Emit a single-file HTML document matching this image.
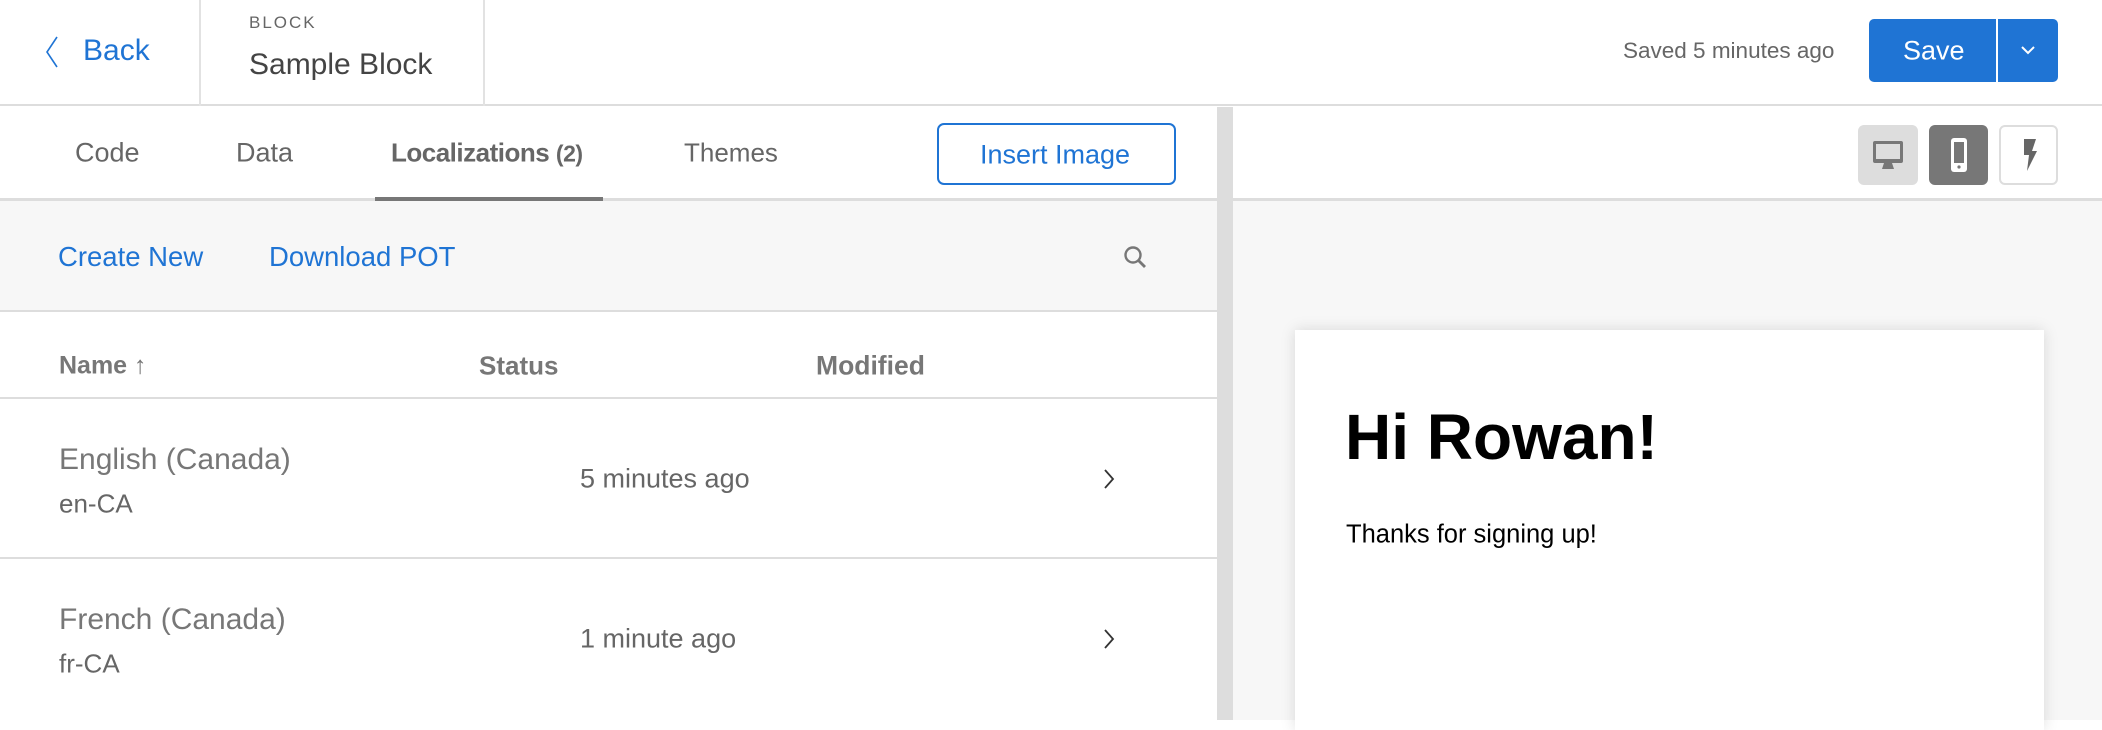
<!DOCTYPE html>
<html><head><meta charset="utf-8"><style>
*{margin:0;padding:0;box-sizing:border-box}
body{width:2102px;height:720px;overflow:hidden;background:#fff;font-family:"Liberation Sans",sans-serif;position:relative}
.a{position:absolute;white-space:nowrap}
.c{transform:translateY(-50%)}
</style></head><body>
<!-- header -->
<div class="a" style="left:0;top:0;width:2102px;height:106px;border-bottom:2px solid #ddd"></div>
<div class="a" style="left:199px;top:0;width:2px;height:106px;background:#e2e2e2"></div>
<div class="a" style="left:483px;top:0;width:2px;height:106px;background:#e2e2e2"></div>
<svg class="a" style="left:42px;top:35px" width="18" height="34"><path d="M15 2 L5 17 L15 32" stroke="#1f74d4" stroke-width="1.6" fill="none"/></svg>
<div class="a c" style="left:83px;top:51px;font-size:30px;color:#1f74d4">Back</div>
<div class="a c" style="left:249px;top:23px;font-size:17px;letter-spacing:2px;color:#666">BLOCK</div>
<div class="a c" style="left:249px;top:65px;font-size:30px;color:#444">Sample Block</div>
<div class="a c" style="left:1623px;top:51px;font-size:22.5px;color:#666">Saved 5 minutes ago</div>
<div class="a" style="left:1869px;top:19px;width:189px;height:63px;background:#1f74d4;border-radius:5px"></div>
<div class="a" style="left:1996px;top:19px;width:2px;height:63px;background:#fff"></div>
<div class="a c" style="left:1903px;top:51px;font-size:27px;color:#fff">Save</div>
<svg class="a" style="left:2019px;top:44px" width="18" height="12"><path d="M3 3 L9 9 L15 3" stroke="#fff" stroke-width="2" fill="none"/></svg>
<!-- left tabs -->
<div class="a" style="left:0;top:198px;width:1217px;height:3px;background:#ddd"></div>
<div class="a" style="left:375px;top:197px;width:228px;height:5px;background:#777"></div>
<div class="a c" style="left:75px;top:153px;font-size:27px;color:#666">Code</div>
<div class="a c" style="left:236px;top:153px;font-size:27px;color:#666">Data</div>
<div class="a c" style="left:391px;top:153px;font-size:26px;color:#666;font-weight:bold;letter-spacing:-0.5px">Localizations <span style="font-size:23px">(2)</span></div>
<div class="a c" style="left:684px;top:153px;font-size:26px;color:#666">Themes</div>
<div class="a" style="left:937px;top:123px;width:239px;height:62px;border:2px solid #1f74d4;border-radius:7px"></div>
<div class="a c" style="left:980px;top:155px;font-size:27px;color:#1f74d4">Insert Image</div>
<!-- toolbar -->
<div class="a" style="left:0;top:201px;width:1217px;height:111px;background:#f7f7f7;border-bottom:2px solid #ddd"></div>
<div class="a c" style="left:58px;top:257px;font-size:27.5px;color:#1f74d4">Create New</div>
<div class="a c" style="left:269px;top:257px;font-size:27.5px;color:#1f74d4">Download POT</div>
<svg class="a" style="left:1122px;top:244px" width="28" height="28"><circle cx="11" cy="11" r="7.5" stroke="#777" stroke-width="2.4" fill="none"/><path d="M16.5 16.5 L23 23" stroke="#777" stroke-width="2.8"/></svg>
<!-- table -->
<div class="a c" style="left:59px;top:366px;font-size:25px;color:#777;font-weight:bold">Name &#8593;</div>
<div class="a c" style="left:479px;top:366px;font-size:26px;color:#777;font-weight:bold">Status</div>
<div class="a c" style="left:816px;top:366px;font-size:26.5px;color:#777;font-weight:bold">Modified</div>
<div class="a" style="left:0;top:397px;width:1217px;height:2px;background:#ddd"></div>
<div class="a c" style="left:59px;top:460px;font-size:30px;color:#777">English (Canada)</div>
<div class="a c" style="left:59px;top:504px;font-size:26px;color:#666">en-CA</div>
<div class="a c" style="left:580px;top:479px;font-size:27px;color:#666">5 minutes ago</div>
<svg class="a" style="left:1101px;top:467px" width="16" height="24"><path d="M4 3 L12 12 L4 21" stroke="#333" stroke-width="1.8" fill="none"/></svg>
<div class="a" style="left:0;top:557px;width:1217px;height:2px;background:#ddd"></div>
<div class="a c" style="left:59px;top:620px;font-size:30px;color:#777">French (Canada)</div>
<div class="a c" style="left:59px;top:664px;font-size:26px;color:#666">fr-CA</div>
<div class="a c" style="left:580px;top:639px;font-size:27px;color:#666">1 minute ago</div>
<svg class="a" style="left:1101px;top:627px" width="16" height="24"><path d="M4 3 L12 12 L4 21" stroke="#333" stroke-width="1.8" fill="none"/></svg>
<!-- divider -->
<div class="a" style="left:1217px;top:107px;width:16px;height:613px;background:#ddd"></div>
<!-- right panel -->
<div class="a" style="left:1233px;top:198px;width:869px;height:3px;background:#ddd"></div>
<div class="a" style="left:1233px;top:201px;width:869px;height:519px;background:#f7f7f7"></div>
<div class="a" style="left:1858px;top:125px;width:60px;height:60px;background:#ddd;border-radius:6px"></div>
<svg class="a" style="left:1870px;top:137px" width="36" height="36"><rect x="3" y="4" width="30" height="22" rx="2" fill="#777"/><rect x="6" y="7" width="24" height="15" fill="#ddd"/><path d="M14 26 L22 26 L24 32 L12 32Z" fill="#777"/></svg>
<div class="a" style="left:1929px;top:125px;width:59px;height:60px;background:#777;border-radius:6px"></div>
<svg class="a" style="left:1945px;top:136px" width="28" height="38"><rect x="6" y="2" width="16" height="34" rx="3" fill="#fff"/><rect x="9" y="6" width="10" height="21" fill="#777"/><circle cx="14" cy="31" r="1.6" fill="#777"/></svg>
<div class="a" style="left:1999px;top:125px;width:59px;height:60px;background:#fff;border:2px solid #ddd;border-radius:6px"></div>
<svg class="a" style="left:2016px;top:137px" width="26" height="36"><path d="M8 2 L20 2 L16 14 L21 14 L11 34 L13 18 L8 18 Z" fill="#666"/></svg>
<div class="a" style="left:1295px;top:330px;width:749px;height:400px;background:#fff;box-shadow:0 0 14px rgba(0,0,0,0.13)"></div>
<div class="a c" style="left:1345px;top:437px;font-size:64px;font-weight:bold;color:#000">Hi Rowan!</div>
<div class="a c" style="left:1346px;top:535px;font-size:25.5px;color:#000">Thanks for signing up!</div>
</body></html>
